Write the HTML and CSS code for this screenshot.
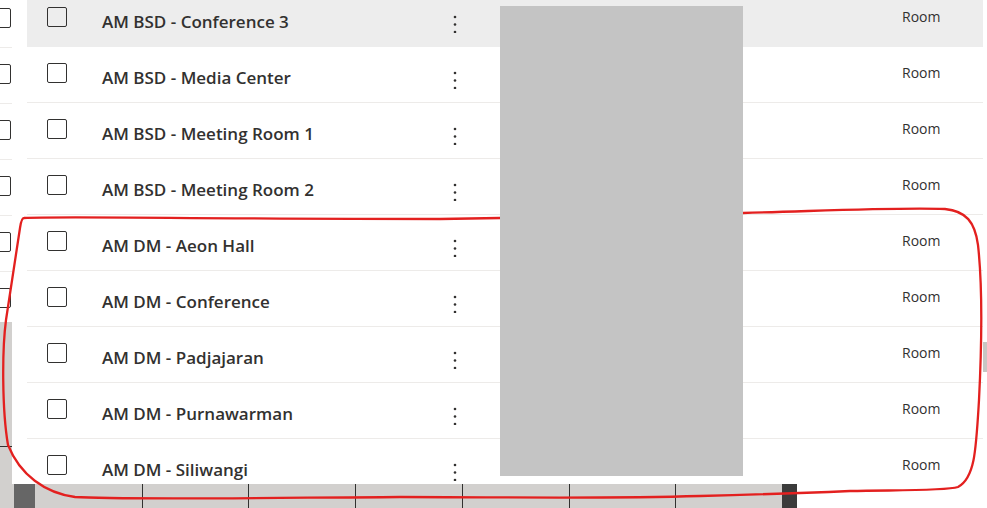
FILE: index.html
```html
<!DOCTYPE html>
<html lang="en">
<head>
<meta charset="utf-8">
<title>Rooms</title>
<link rel="stylesheet" href="styles.css">
</head>
<body>
<div class="stage">
  <div class="behind">
    <div class="behind-top">
      <div class="behind-row"><span class="behind-box"></span></div>
      <div class="behind-row"><span class="behind-box"></span></div>
      <div class="behind-row"><span class="behind-box"></span></div>
      <div class="behind-row"><span class="behind-box"></span></div>
      <div class="behind-row"><span class="behind-box"></span></div>
      <div class="behind-row"><span class="behind-box"></span></div>
    </div>
    <div class="behind-bottom"><div class="behind-line"></div></div>
  </div>

  <div class="panel">
    <div class="list">
      <div class="row row-active">
        <span class="check"></span>
        <span class="name">AM BSD - Conference 3</span>
        <span class="more"><svg width="4" height="18" viewBox="0 0 4 18"><circle cx="2" cy="2" r="1.3"/><circle cx="2" cy="9.5" r="1.3"/><circle cx="2" cy="17" r="1.3"/></svg></span>
        <span class="gap"></span>
        <span class="type">Room</span>
      </div>
      <div class="row">
        <span class="check"></span>
        <span class="name">AM BSD - Media Center</span>
        <span class="more"><svg width="4" height="18" viewBox="0 0 4 18"><circle cx="2" cy="2" r="1.3"/><circle cx="2" cy="9.5" r="1.3"/><circle cx="2" cy="17" r="1.3"/></svg></span>
        <span class="gap"></span>
        <span class="type">Room</span>
      </div>
      <div class="row">
        <span class="check"></span>
        <span class="name">AM BSD - Meeting Room 1</span>
        <span class="more"><svg width="4" height="18" viewBox="0 0 4 18"><circle cx="2" cy="2" r="1.3"/><circle cx="2" cy="9.5" r="1.3"/><circle cx="2" cy="17" r="1.3"/></svg></span>
        <span class="gap"></span>
        <span class="type">Room</span>
      </div>
      <div class="row">
        <span class="check"></span>
        <span class="name">AM BSD - Meeting Room 2</span>
        <span class="more"><svg width="4" height="18" viewBox="0 0 4 18"><circle cx="2" cy="2" r="1.3"/><circle cx="2" cy="9.5" r="1.3"/><circle cx="2" cy="17" r="1.3"/></svg></span>
        <span class="gap"></span>
        <span class="type">Room</span>
      </div>
      <div class="row">
        <span class="check"></span>
        <span class="name">AM DM - Aeon Hall</span>
        <span class="more"><svg width="4" height="18" viewBox="0 0 4 18"><circle cx="2" cy="2" r="1.3"/><circle cx="2" cy="9.5" r="1.3"/><circle cx="2" cy="17" r="1.3"/></svg></span>
        <span class="gap"></span>
        <span class="type">Room</span>
      </div>
      <div class="row">
        <span class="check"></span>
        <span class="name">AM DM - Conference</span>
        <span class="more"><svg width="4" height="18" viewBox="0 0 4 18"><circle cx="2" cy="2" r="1.3"/><circle cx="2" cy="9.5" r="1.3"/><circle cx="2" cy="17" r="1.3"/></svg></span>
        <span class="gap"></span>
        <span class="type">Room</span>
      </div>
      <div class="row">
        <span class="check"></span>
        <span class="name">AM DM - Padjajaran</span>
        <span class="more"><svg width="4" height="18" viewBox="0 0 4 18"><circle cx="2" cy="2" r="1.3"/><circle cx="2" cy="9.5" r="1.3"/><circle cx="2" cy="17" r="1.3"/></svg></span>
        <span class="gap"></span>
        <span class="type">Room</span>
      </div>
      <div class="row">
        <span class="check"></span>
        <span class="name">AM DM - Purnawarman</span>
        <span class="more"><svg width="4" height="18" viewBox="0 0 4 18"><circle cx="2" cy="2" r="1.3"/><circle cx="2" cy="9.5" r="1.3"/><circle cx="2" cy="17" r="1.3"/></svg></span>
        <span class="gap"></span>
        <span class="type">Room</span>
      </div>
      <div class="row">
        <span class="check"></span>
        <span class="name">AM DM - Siliwangi</span>
        <span class="more"><svg width="4" height="18" viewBox="0 0 4 18"><circle cx="2" cy="2" r="1.3"/><circle cx="2" cy="9.5" r="1.3"/><circle cx="2" cy="17" r="1.3"/></svg></span>
        <span class="gap"></span>
        <span class="type">Room</span>
      </div>
    </div>
    <div class="scroll"><div class="thumb"></div></div>
  </div>

  <div class="calendar">
    <div class="cal-pad"></div>
    <div class="cal-dark-l"></div>
    <div class="cal-grid">
      <div class="cal-cell"></div><div class="cal-cell"></div><div class="cal-cell"></div><div class="cal-cell"></div><div class="cal-cell"></div><div class="cal-cell"></div><div class="cal-cell"></div>
    </div>
    <div class="cal-dark-r"></div>
    <div class="cal-rest"></div>
  </div>

  <svg class="annotation" width="987" height="508" viewBox="0 0 987 508">
    <path d="M 24 218 C 60 216, 200 219, 440 219 L 500 218 L 743 213 C 820 211, 900 207, 945 209 C 966 211, 975 222, 978 245 C 983 290, 982 340, 979 400 C 976 450, 975 478, 958 487 C 945 491, 900 490, 850 491 C 780 494, 740 495, 700 496 C 600 499, 500 497, 400 497 C 250 498, 120 500, 75 497 C 45 493, 20 475, 8 445 C 2 410, 2 350, 6 320 C 12 280, 18 240, 20 228 C 21 221, 22 218, 24 218 Z" fill="none" stroke="#e3201f" stroke-width="2.3" stroke-linejoin="round"/>
  </svg>

  <div class="redaction"></div>
</div>
</body>
</html>
```

FILE: styles.css
```css
html, body {
  margin: 0;
  padding: 0;
  background: #ffffff;
}

.stage {
  position: relative;
  width: 987px;
  height: 508px;
  overflow: hidden;
  display: grid;
  grid-template-columns: 12px 1fr;
  grid-template-rows: 484px 24px;
  font-family: "Open Sans", "Noto Sans", "Liberation Sans", sans-serif;
  color: #323130;
}

/* background layer peeking at the left */
.behind {
  grid-row: 1;
  grid-column: 1;
  display: flex;
  flex-direction: column;
  overflow: hidden;
}

.behind-top {
  height: 322px;
  overflow: hidden;
  background: #ffffff;
}

.behind-row {
  height: 39px;
  padding-top: 16px;
  border-bottom: 1px solid #edebe9;
}

.behind-row:first-child {
  margin-top: -8px;
}

.behind-box {
  display: block;
  width: 20px;
  height: 20px;
  margin-left: -9px;
  border: 1px solid #323130;
  border-radius: 2px;
  box-sizing: border-box;
}

.behind-bottom {
  flex: 1;
  background: #d2d0ce;
  padding-top: 124px;
}

.behind-line {
  border-top: 1px solid #323130;
}

/* main panel */
.panel {
  grid-row: 1;
  grid-column: 2;
  background: #ffffff;
  overflow: hidden;
  display: grid;
  grid-template-columns: 1fr 4px;
  padding-left: 15px;
}

.list {
  margin-top: -9px;
}

.row {
  display: grid;
  grid-template-columns: 55px 340px 25px 1fr 81px;
  align-items: start;
  height: 55px;
  padding-left: 20px;
  border-bottom: 1px solid #edebe9;
}

.row-active {
  background: #ededed;
  border-bottom-color: #ededed;
}

.check {
  display: block;
  width: 20px;
  height: 20px;
  margin-top: 16px;
  border: 1px solid #323130;
  border-radius: 2px;
  box-sizing: border-box;
}

.name {
  font-size: 17px;
  font-weight: 600;
  line-height: 24px;
  padding-top: 19px;
  white-space: nowrap;
}

.more {
  display: flex;
  justify-content: center;
  padding-top: 24px;
}

.more svg {
  display: block;
  fill: #323130;
}

.type {
  font-size: 14px;
  line-height: 20px;
  padding-top: 16px;
}

.scroll {
  background: #ffffff;
  padding-top: 342px;
}

.thumb {
  height: 30px;
  background: #c8c6c4;
}

/* calendar strip at the bottom */
.calendar {
  grid-row: 2;
  grid-column: 1 / span 2;
  display: flex;
}

.cal-pad {
  width: 14px;
  background: #d2d0ce;
}

.cal-dark-l {
  width: 21px;
  background: #666666;
}

.cal-grid {
  width: 747px;
  display: grid;
  grid-template-columns: repeat(7, 1fr);
  background: #d2d0ce;
}

.cal-cell + .cal-cell {
  border-left: 1px solid #323130;
}

.cal-dark-r {
  width: 15px;
  background: #3b3b3b;
}

.cal-rest {
  flex: 1;
  background: #ffffff;
}

/* overlays */
.annotation {
  position: absolute;
  left: 0;
  top: 0;
  z-index: 1;
  pointer-events: none;
}

.redaction {
  position: absolute;
  left: 500px;
  top: 6px;
  width: 243px;
  height: 470px;
  background: #c4c4c4;
  z-index: 2;
}
```
